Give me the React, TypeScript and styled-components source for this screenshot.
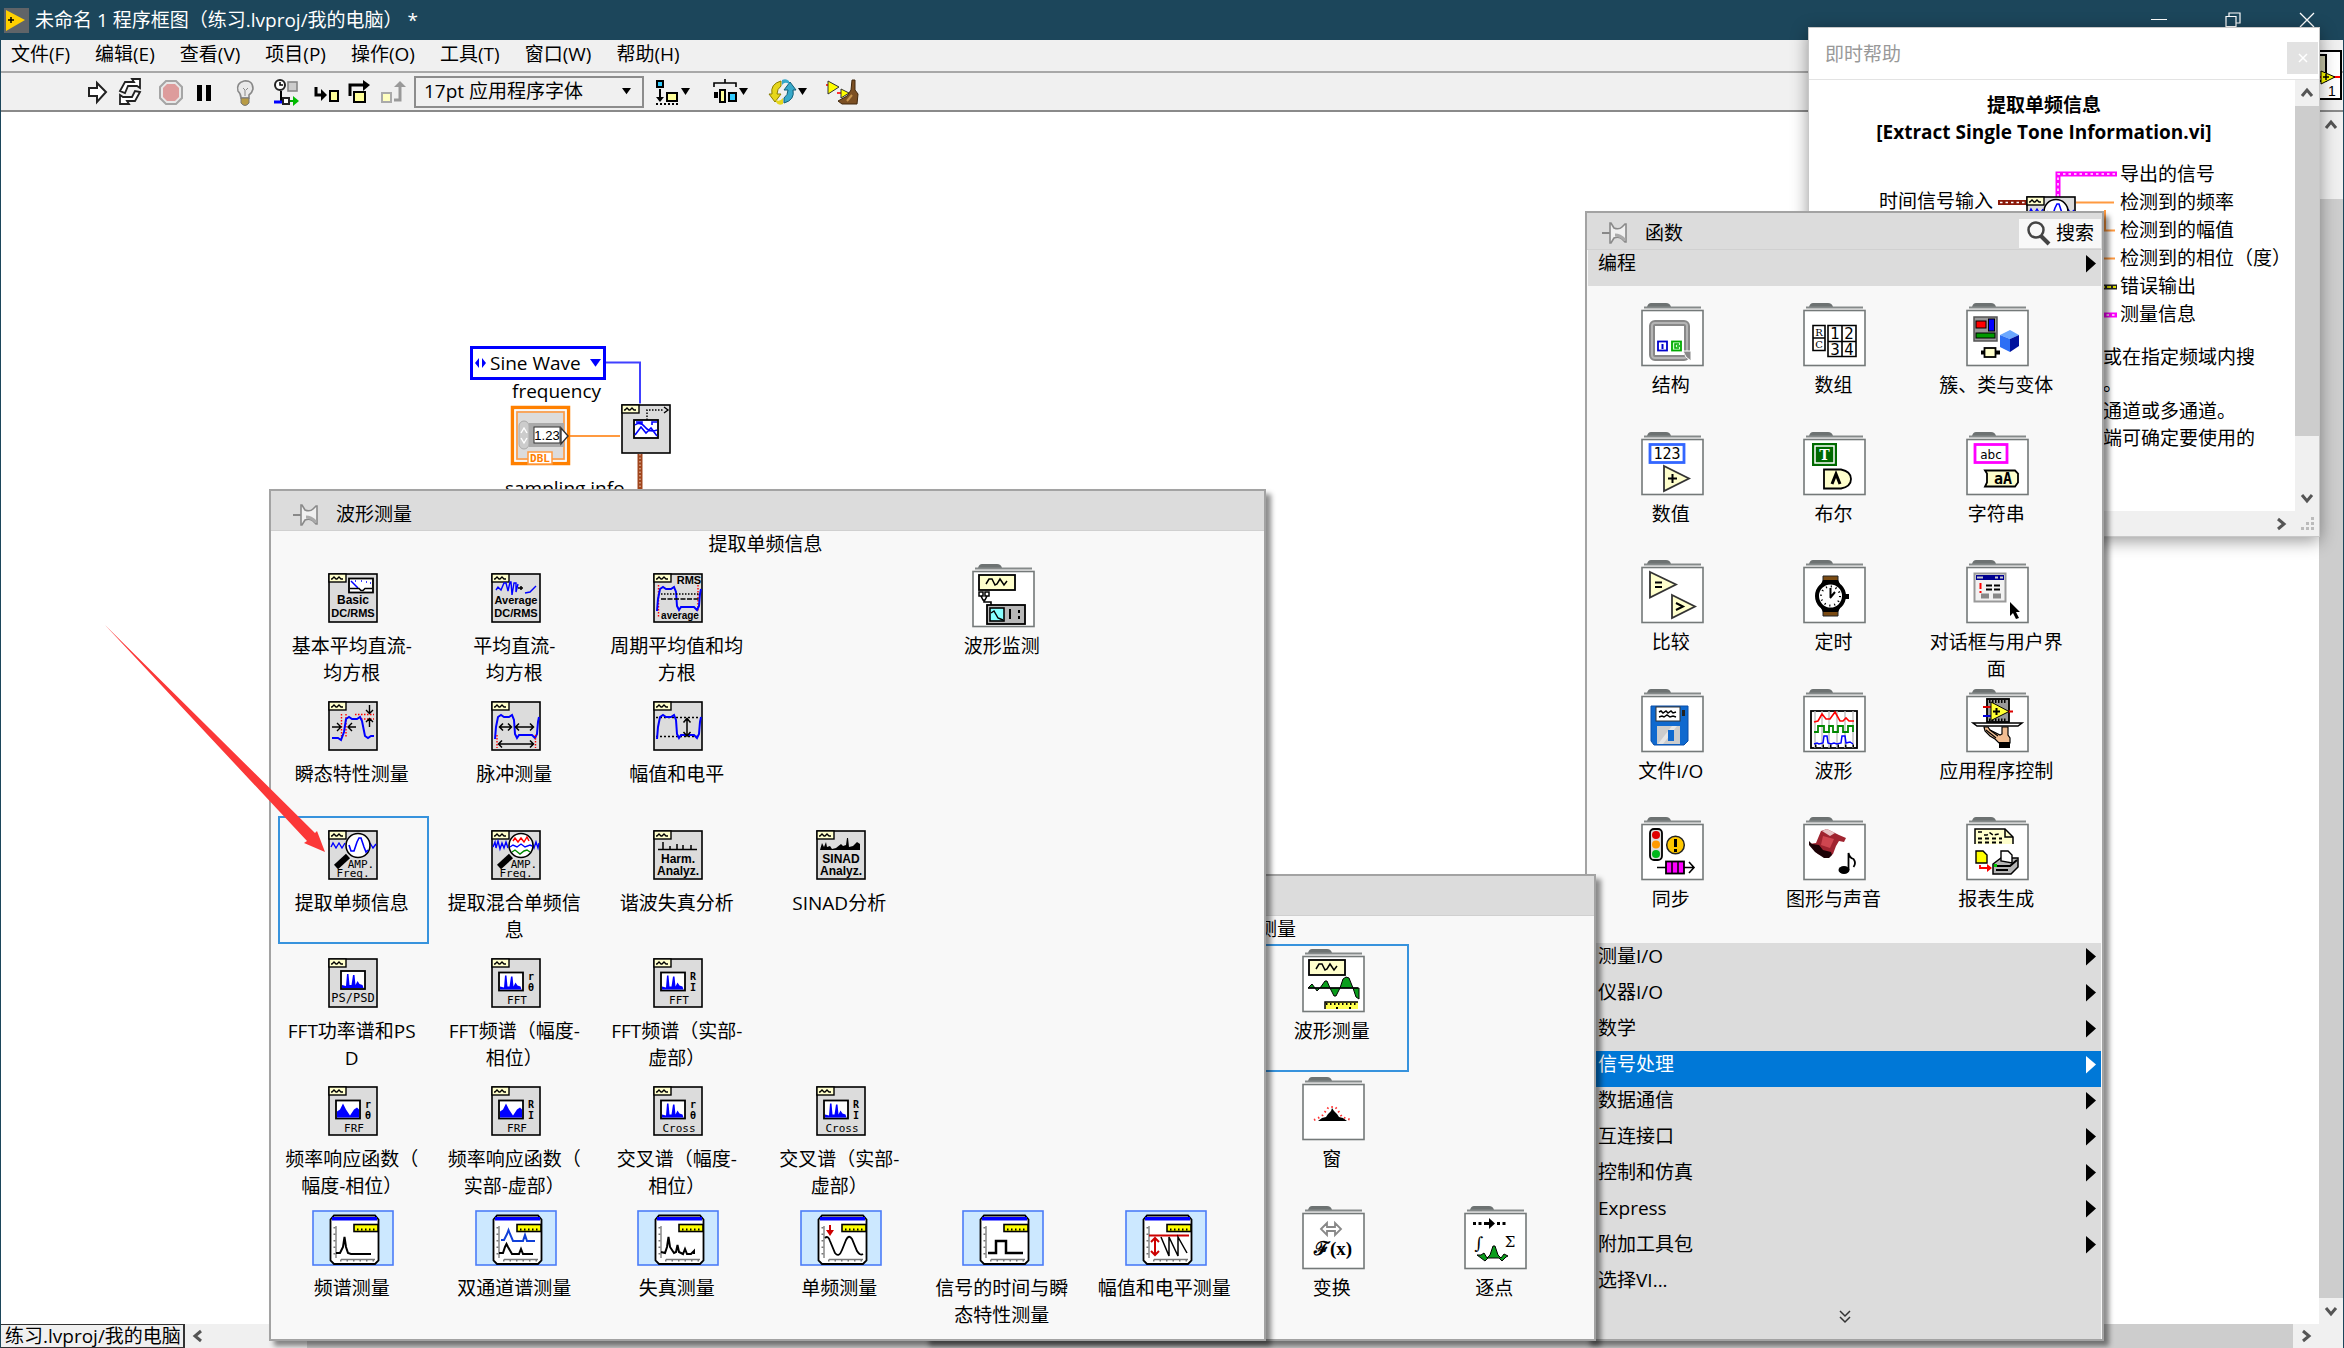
import React from 'react';
import styled, { createGlobalStyle, css } from 'styled-components';

const GlobalStyle = createGlobalStyle`
  *, *::before, *::after { box-sizing: border-box; }
  body { margin: 0; background: #fff; color: #000; }
  body, button, select {
    font-family: "Open Sans", "Noto Sans CJK SC", sans-serif;
    font-size: 19px;
    line-height: 27px;
  }
  button { margin: 0; padding: 0; border: 0; background: none; color: inherit; }
  svg { display: block; flex: none; }
`;

const TEAL = '#1c465b';
const CHROME = '#f0f0f0';
const HEADER = '#dcdcdc';
const PALETTE = '#f8f8f8';
const THUMB = '#cdcdcd';
const BLUE = '#0000ff';

/* ---------- application window ---------- */

const AppWindow = styled.div`
  position: relative;
  display: flex;
  flex-direction: column;
  height: 100vh;
  overflow: hidden;
  border: solid ${TEAL};
  border-width: 0 1px;
  background: #fff;
`;

const TitleBar = styled.header`
  display: flex;
  align-items: center;
  height: 40px;
  padding: 0 2px 0 3px;
  gap: 6px;
  background: ${TEAL};
  color: #fff;
`;

const TitleText = styled.h1`
  flex: 1;
  margin: 0;
  font-size: 19px;
  font-weight: 400;
  white-space: pre;
`;

const CaptionButton = styled.button`
  display: flex;
  align-items: center;
  justify-content: center;
  width: 68px;
  height: 38px;
`;

const MenuBar = styled.nav`
  display: flex;
  gap: 25px;
  height: 33px;
  padding: 0 0 3px 10px;
  background: ${CHROME};
  border-bottom: 2px solid #a8a8a8;
`;

const ToolBar = styled.div`
  display: flex;
  align-items: center;
  height: 39px;
  padding-left: 83px;
  gap: 15px;
  background: ${CHROME};
  border-bottom: 2px solid #8a8a8a;
`;

const ToolGroup = styled.div`
  display: flex;
  gap: 7px;
`;

const FontBox = styled.label`
  display: flex;
  align-items: center;
  width: 230px;
  height: 32px;
  margin: 0 -5px 0 -7px;
  border: 2px solid #8c8c8c;
  position: relative;
`;

const PlainSelect = styled.select`
  appearance: none;
  width: 100%;
  height: 100%;
  padding: 0 8px;
  border: 0;
  background: none;
  color: #000;
`;

const SelectMark = styled.span`
  position: absolute;
  right: ${(p: { $right: number }) => p.$right}px;
  pointer-events: none;
`;

const ConnectorIcon = styled.button`
  position: absolute;
  top: 50px;
  right: 1px;
  width: 50px;
  height: 50px;
`;

const Editor = styled.main`
  flex: 1;
  min-height: 0;
  display: grid;
  grid-template: minmax(0, 1fr) 24px / minmax(0, 1fr) 24px;
`;

const Canvas = styled.div`
  position: relative;
  overflow: hidden;
  background: #fff;
`;

const BottomBar = styled.footer`
  display: flex;
  background: ${CHROME};
`;

const ContextTab = styled.button`
  padding: 0 2px 0 4px;
  border: solid #333;
  border-width: 1px 2px 1px 0;
  line-height: 20px;
  white-space: nowrap;
`;

const Corner = styled.div`
  background: ${CHROME};
`;

const ScrollTrack = styled.div<{ $vertical?: boolean }>`
  display: flex;
  flex-direction: ${(p) => (p.$vertical ? 'column' : 'row')};
  flex: 1;
  min-width: 0;
  min-height: 0;
  background: ${CHROME};
`;

const ScrollButton = styled.button`
  display: flex;
  align-items: center;
  justify-content: center;
  flex: 0 0 26px;
  min-width: 24px;
`;

const ScrollThumb = styled.div<{ $before: number; $after: number; $vertical?: boolean }>`
  flex: 1;
  background: ${THUMB};
  margin: ${(p) => (p.$vertical ? `${p.$before}px 0 ${p.$after}px` : `0 ${p.$after}px 0 ${p.$before}px`)};
`;

/* ---------- block diagram ---------- */

const Node = styled.div<{ $x: number; $y: number }>`
  position: absolute;
  left: ${(p) => p.$x}px;
  top: ${(p) => p.$y}px;
  white-space: nowrap;
`;

const EnumConstant = styled.label`
  position: relative;
  display: flex;
  align-items: center;
  width: 136px;
  height: 34px;
  padding-left: 2px;
  border: 3px solid ${BLUE};
  background: #fff;
`;

const EnumSelect = styled(PlainSelect)`
  padding: 0 4px;
`;

/* ---------- floating windows ---------- */

const windowFrame = css`
  position: absolute;
  display: flex;
  flex-direction: column;
  border: 2px solid #a3a3a3;
  box-shadow: 5px 5px 5px rgba(0, 0, 0, 0.45);
`;

const PaletteWindow = styled.section<{ $left: number; $top: number; $width: number }>`
  ${windowFrame}
  left: ${(p) => p.$left}px;
  top: ${(p) => p.$top}px;
  bottom: 7px;
  width: ${(p) => p.$width}px;
  background: ${PALETTE};
`;

const PaletteHeader = styled.header<{ $tall?: boolean }>`
  display: flex;
  align-items: center;
  gap: 17px;
  flex: 0 0 ${(p) => (p.$tall ? 40 : 37)}px;
  padding: ${(p) => (p.$tall ? '8px' : '4px')} 0 0 ${(p) => (p.$tall ? 22 : 15)}px;
  background: ${HEADER};
  border-bottom: 1px solid #d0d0d0;
`;

const PaletteTitle = styled.h2`
  flex: 1;
  margin: 0;
  font-size: 19px;
  font-weight: 400;
`;

const SearchButton = styled.button`
  display: flex;
  align-items: center;
  gap: 4px;
  height: 29px;
  margin-right: 1px;
  padding: 0 7px;
  background: ${PALETTE};
`;

const PaletteCaption = styled.p`
  margin: 0;
  flex: 0 0 27px;
  padding-right: 4px;
  text-align: center;
`;

type GridProps = { $cols: number; $rows: number; $top?: number; $left: number; $right: number; $bottom: number };

const TileGrid = styled.div<GridProps>`
  flex: 1;
  min-height: 0;
  display: grid;
  grid-template-columns: repeat(${(p) => p.$cols}, 1fr);
  grid-template-rows: repeat(${(p) => p.$rows}, minmax(0, 1fr));
  padding: ${(p) => p.$top ?? 0}px ${(p) => p.$right}px ${(p) => p.$bottom}px ${(p) => p.$left}px;
`;

const TileButton = styled.button<{ $col: number; $row: number; $selected?: boolean }>`
  grid-column: ${(p) => p.$col};
  grid-row: ${(p) => p.$row};
  display: flex;
  flex-direction: column;
  align-items: center;
  justify-content: flex-start;
  margin: 0 6px;
  box-shadow: ${(p) => (p.$selected ? 'inset 0 0 0 2px #3793dd' : 'none')};
`;

type Kind = 'vi' | 'folder' | 'express';
const iconOffset: Record<Kind, number> = { vi: 14, folder: 5, express: 9 };

const TileIcon = styled.span<{ $kind: Kind }>`
  flex: 0 0 74px;
  padding-top: ${(p) => iconOffset[p.$kind]}px;
`;

const TileLabel = styled.span`
  padding-right: 3px;
  white-space: pre;
  text-align: center;
`;

const CategoryList = styled.ul`
  flex: none;
  margin: 0 1px;
  padding: 0;
  list-style: none;
  background: ${HEADER};
`;

const CategoryButton = styled.button<{ $active?: boolean }>`
  display: flex;
  align-items: flex-start;
  justify-content: space-between;
  width: 100%;
  height: 36px;
  padding: 0 5px 0 10px;
  background: ${(p) => (p.$active ? '#0078d7' : 'transparent')};
  color: ${(p) => (p.$active ? '#fff' : '#000')};
`;

const MoreButton = styled.button`
  display: flex;
  align-items: center;
  justify-content: center;
  width: 100%;
  height: 28px;
  margin-bottom: 8px;
`;

const HelpWindow = styled.aside`
  position: absolute;
  top: 27px;
  right: 23px;
  width: 512px;
  display: flex;
  flex-direction: column;
  border: 1px solid #c8c8c8;
  background: #fff;
  box-shadow: 0 4px 16px rgba(0, 0, 0, 0.4);
`;

const HelpHeader = styled.header`
  display: flex;
  justify-content: space-between;
  align-items: flex-end;
  height: 52px;
  padding: 0 1px 5px 16px;
  border-bottom: 1px solid #e3e3e3;
  color: #999;
`;

const HelpName = styled.span`
  padding-bottom: 6px;
`;

const HelpClose = styled.button`
  display: flex;
  align-items: center;
  justify-content: center;
  width: 31px;
  height: 32px;
  background: #e2e2e2;
`;

const HelpMiddle = styled.div`
  display: flex;
  height: 431px;
`;

const HelpScroll = styled.div`
  display: flex;
  width: 24px;
`;

const HelpBody = styled.div`
  flex: 1;
  padding-top: 12px;
`;

const HelpHeading = styled.h3`
  margin: 0 16px 14px 0;
  font-size: 19px;
  font-weight: 700;
  text-align: center;
`;

const Pinout = styled.div`
  display: grid;
  grid-template-columns: 184px 127px 1fr;
`;

const PinInput = styled.span`
  padding-top: 28px;
  text-align: right;
`;

const PinOutputs = styled.ul`
  margin: 0;
  padding: 0;
  list-style: none;
  line-height: 28px;
  white-space: nowrap;
`;

const HelpText = styled.p`
  margin: 16px 0 0;
  padding-left: 294px;
  white-space: pre;
`;

const HelpFooter = styled.div`
  display: flex;
  justify-content: flex-end;
  align-items: center;
  gap: 12px;
  height: 25px;
  padding-right: 3px;
  background: ${CHROME};
`;

const Annotation = styled.svg`
  position: absolute;
  left: 99px;
  top: 620px;
  pointer-events: none;
`;

/* ---------- drawing helpers ---------- */

type TextProps = { x: number; y: number; s?: number; f?: string; w?: number; a?: 'start' | 'middle' | 'end'; font?: string; children: React.ReactNode };
const T = ({ x, y, s = 12, f = '#000', w = 400, a = 'middle', font = 'Liberation Sans', children }: TextProps) => (
  <text x={x} y={y} fontSize={s} fill={f} fontWeight={w} textAnchor={a} fontFamily={`"${font}", sans-serif`}>{children}</text>
);

const Line = ({ d, c = '#000', w = 2, dash }: { d: string; c?: string; w?: number; dash?: string }) => (
  <path d={d} fill="none" stroke={c} strokeWidth={w} strokeDasharray={dash} />
);

const ViBase = () => (
  <>
    <rect x="1" y="1" width="48" height="48" fill="#dcdcdc" stroke="#000" strokeWidth="1.6" />
    <rect x="1" y="1" width="17" height="8" fill="#ffffcc" stroke="#000" strokeWidth="1.4" />
    <Line d="M3 6h1l2-2 2 2h1l2-2 2 2h2" w={1.3} />
  </>
);

const ViFrame = ({ children }: { children?: React.ReactNode }) => (
  <svg width="50" height="50" viewBox="0 0 50 50">
    <ViBase />
    {children}
  </svg>
);

const Folder = ({ children }: { children?: React.ReactNode }) => (
  <svg width="63" height="64" viewBox="0 0 63 64">
    <path d="M6 4q1-4 4-4h15q4 0 5 4z" fill="#6d7272" />
    <path d="M3 4.500h57" stroke="#858a8a" strokeWidth="2" />
    <rect x="1" y="7.500" width="61" height="55" fill="#fff" stroke="#747979" strokeWidth="1.6" />
    {children}
  </svg>
);

const Express = ({ children }: { children?: React.ReactNode }) => (
  <svg width="82" height="56" viewBox="0 0 82 56">
    <rect x="1" y="1" width="80" height="54" fill="#cce8ff" stroke="#4b7cf8" strokeWidth="1.6" />
    <g transform="translate(17 4)">
      <path d="M5 1.500h41l3.500 4v41l-3.500 3.500h-41l-3.500-3.500v-41z" fill="#fff" stroke="#000" strokeWidth="1.8" />
      <path d="M3 3h45v3.500h-45z" fill={BLUE} />
      <Line d="M7 12v32M12 45.500h34" c="#777" w={1.3} />
      <Line d="M5.500 13v32M11 46.500h35" c="#777" w={2} dash="1.5 5" />
      {children}
      <rect x="25" y="10.500" width="24" height="7" fill="#ff0" stroke="#000" strokeWidth="1.6" />
      <Line d="M28 15.500h19" w={2} dash="1.500 2.500" />
    </g>
  </svg>
);

const pulse = 'M4 38l1-12 2-10 3-2 3 2h5l3-2 2 5 1 14 2 4 2-3h13l3 3 2-4 1-12 1-5';

const Spectrum = ({ x, y }: { x: number; y: number }) => (
  <g transform={`translate(${x} ${y})`}>
    <rect x="0" y="0" width="24" height="18" fill="#fff" stroke="#000" strokeWidth="1.8" />
    <path d="M1 17v-3l4 1 1-12h1.500l1 11 2 0 1.500-10h1.500l1 10 2-4 2 3 3 1 1 3z" fill={BLUE} />
  </g>
);

const Response = ({ x, y }: { x: number; y: number }) => (
  <g transform={`translate(${x} ${y})`}>
    <rect x="0" y="0" width="24" height="18" fill="#fff" stroke="#000" strokeWidth="1.8" />
    <path d="M1 17v-6l3-2 3-6 3 6 4 6 4-6 3-2 2 2v8z" fill={BLUE} />
  </g>
);

const SpecVi = ({ kind, unit, text }: { kind: 'spec' | 'resp'; unit: 'r' | 'i'; text: string }) => (
  <ViFrame>
    {kind === 'spec' ? <Spectrum x={8} y={14.5} /> : <Response x={8} y={14.5} />}
    <T x={40} y={22} s={10} w={700} font="DejaVu Sans Mono">{unit === 'r' ? 'r' : 'R'}</T>
    <T x={40} y={33} s={10} w={700} font="DejaVu Sans Mono">{unit === 'r' ? 'θ' : 'I'}</T>
    <T x={26} y={46} s={11} font="DejaVu Sans Mono">{text}</T>
  </ViFrame>
);

const LensGlass = ({ children }: { children: React.ReactNode }) => (
  <>
    <Line d="M20 26L8 37" w={6} />
    <circle cx="30" cy="15.500" r="12" fill="#fff" stroke="#000" strokeWidth="1.600" />
    {children}
  </>
);

const Lens = ({ children }: { children: React.ReactNode }) => (
  <>
    <LensGlass>{children}</LensGlass>
    <T x={33} y={38} s={11} font="DejaVu Sans Mono">AMP.</T>
    <T x={25} y={47} s={11} font="DejaVu Sans Mono">Freq.</T>
  </>
);

const toneNoise = 'M3 17l2-4 3 5 3-5 3 5 3-5M42 13l3 5 3-4';
const toneCurve = 'M21 15l2 6h3l3-9 2-4h2l3 9 2 5 2-2';

const Chevron = styled.svg<{ $turn: number }>`
  transform: rotate(${(p) => p.$turn}deg);
`;

const SmallChevron = ({ turn }: { turn: number }) => (
  <Chevron $turn={turn} width="14" height="14" viewBox="0 0 14 14">
    <path d="M2 10l5-6 5 6" fill="none" stroke="#555" strokeWidth="3" />
  </Chevron>
);

const Drop = ({ size = 9, color = '#000' }: { size?: number; color?: string }) => (
  <svg width={size} height={size} viewBox="0 0 10 10"><path d="M0 1h10l-5 7z" fill={color} /></svg>
);

const RightMark = () => (
  <svg width="10" height="26" viewBox="0 0 10 26"><path d="M0 5l10 8.500-10 9z" fill="currentColor" /></svg>
);

const Pin = () => (
  <svg width="26" height="24" viewBox="0 0 26 24">
    <path d="M0 12h8" stroke="#888" strokeWidth="2" />
    <path d="M8 2l1 0 3 5q5 2 8-1l3-3h1v18h-1l-3-3q-3-3-8-1l-3 5h-1z" fill="#f0f0f0" stroke="#8a8a8a" strokeWidth="1.600" />
    <path d="M13 14q5 0 10 5" stroke="#aaa" strokeWidth="3" fill="none" />
  </svg>
);

/* ---------- icons ---------- */

const icons: Record<string, React.ReactNode> = {
  basic: (
    <ViFrame>
      <rect x="21" y="5.500" width="24" height="14" fill="#fff" stroke="#000" strokeWidth="1.800" />
      <Line d="M23 8l7 7M27 8h1M33 8h1M38 9h1M42 10h1" c={BLUE} w={1.5} />
      <path d="M22 15.500h9l2 2h2l2-2h7" stroke="#000" strokeWidth="1.500" fill="none" />
      <T x={25} y={31} s={12} w={700}>Basic</T>
      <T x={25} y={44} s={11} w={700}>DC/RMS</T>
    </ViFrame>
  ),
  average: (
    <ViFrame>
      <Line d="M5 17l2-3 3 3 3-7 2 0 2 8 2-9 1 0 1 13 2-12 2 0v9l2-8M34 20l5-1 6-6" c={BLUE} w={1.4} />
      <Line d="M27 15h5M30 13v4" w={1.500} />
      <T x={25} y={31} s={11} w={700}>Average</T>
      <T x={25} y={44} s={11} w={700}>DC/RMS</T>
    </ViFrame>
  ),
  cycle: (
    <ViFrame>
      <Line d="M5.500 12v32M45 12v26" c="#f00" w={1.4} dash="1.500 1.500" />
      <Line d={pulse} c={BLUE} />
      <Line d="M8 21h38" w={1.4} dash="1.500 1.500" />
      <Line d="M8 26h38" w={1.4} dash="5 1.500" />
      <T x={36} y={11} s={11} w={700}>RMS</T>
      <T x={27} y={46} s={10} w={700}>average</T>
    </ViFrame>
  ),
  transient: (
    <ViFrame>
      <Line d="M13.500 13v23M18 13v23M27 13.500h19M33 18h13" c="#f00" w={1.400} dash="1.500 1.500" />
      <Line d="M4 37l6 0 3 2 3-8 2-13 3-2 3 2h5l3-2 2 4 3 15 3 2 3-2h3" c={BLUE} />
      <Line d="M4 26h8M9 22l4 4-4 4M28 26h-8M24 22l-4 4 4 4M41.500 4v8M38 9l3.500 3.500 3.500-3.500M41.500 26v-8M38 21l3.500-3.500 3.500 3.500" w={1.400} />
    </ViFrame>
  ),
  pulse: (
    <ViFrame>
      <Line d={pulse} c={BLUE} />
      <Line d="M6 34v13M44.500 34v13" c="#f00" w={1.400} dash="1.500 1.500" />
      <Line d="M9 26h11M12 22.500l-3.500 3.500 3.500 3.500M17 22.500l3.500 3.500-3.500 3.500M24 26h19M28 22.500l-3.500 3.500 3.500 3.500M39 22.500l3.500 3.500-3.500 3.500M7 43h36M11 39.500l-3.500 3.500 3.500 3.500M39 39.500l3.500 3.500-3.500 3.500" w={1.500} />
    </ViFrame>
  ),
  level: (
    <ViFrame>
      <Line d="M3 16.500h44M3 35.500h44" w={1.400} dash="2 2" />
      <Line d={pulse} c={BLUE} />
      <Line d="M34 18v16M30.500 21.500l3.500-4 3.500 4M30.500 31l3.500 4 3.500-4" w={1.500} />
    </ViFrame>
  ),
  tone: (
    <ViFrame>
      <Line d={toneNoise} c={BLUE} w={1.400} />
      <Lens><Line d={toneCurve} c={BLUE} w={1.600} /></Lens>
    </ViFrame>
  ),
  multitone: (
    <ViFrame>
      <Line d="M2 17l2-5 1 6 2-7 2 8 2-6 2 5 2-6 2 6M41 13l2 5 2-6 2 6 1-5" c={BLUE} w={1.400} />
      <Lens>
        <Line d="M22 11l2-3 3 4 3-4 3 4 3-5 2 4" c="#f00" w={1.400} />
        <Line d="M19 17l3-2 4 2 4-3 4 3 5-2 2 1" c={BLUE} w={1.400} />
        <Line d="M21 22l3-2 5 4 4-3 3-1 3 2" c="#080" w={1.400} />
      </Lens>
    </ViFrame>
  ),
  harm: (
    <ViFrame>
      <Line d="M5 19.500h39M10 19v-7M17 19v-3M24 19v-5M30 19v-4M38 19v-4" w={1.500} />
      <T x={25} y={33} s={12} w={700}>Harm.</T>
      <T x={25} y={45} s={12} w={700}>Analyz.</T>
    </ViFrame>
  ),
  sinad: (
    <ViFrame>
      <path d="M4 20l2-7 2 4 2-5 1 5 3-1 2 3 4-1 5-4 2 2 3-1 1-7h1l1 9 4-1 4-4 3 2v6z" fill="#000" />
      <T x={25} y={33} s={12} w={700}>SINAD</T>
      <T x={25} y={45} s={12} w={700}>Analyz.</T>
    </ViFrame>
  ),
  psd: (
    <ViFrame>
      <Spectrum x={13} y={13} />
      <T x={25} y={44} s={12} font="DejaVu Sans Mono">PS/PSD</T>
    </ViFrame>
  ),
  fftR: <SpecVi kind="spec" unit="r" text="FFT" />,
  fftI: <SpecVi kind="spec" unit="i" text="FFT" />,
  frfR: <SpecVi kind="resp" unit="r" text="FRF" />,
  frfI: <SpecVi kind="resp" unit="i" text="FRF" />,
  crossR: <SpecVi kind="spec" unit="r" text="Cross" />,
  crossI: <SpecVi kind="spec" unit="i" text="Cross" />,
  exSpectrum: <Express><Line d="M7 39l4 0 3-6 1.500-10 1.500 10 2 6 3 1h20" /></Express>,
  exDual: (
    <Express>
      <Line d="M9 26l3 0 3-6 1.500-4 1.500 4 3 7h10l2-6 2 6h8" c="#1040d8" />
      <Line d="M7 39l4 0 2-6 1.500-3 1.500 3 4 7h7l2-5 2 5h10" />
    </Express>
  ),
  exDistortion: <Express><Line d="M7 38l4 1 2-6 1.500-10 1.500 10 4 6 2-1 1.500-7 1.500 7 4 2 2-5 2 5h4l3-3v3" /></Express>,
  exTone: (
    <Express>
      <Line d="M13 11v7" c="#c00" />
      <path d="M9 16h8l-4 6z" fill="#c00" />
      <Line d="M8 24q3-3 5 3l5 12q4 5 7-3l4-10q3-6 6-1l5 12q3 5 6 3" w={1.800} />
    </Express>
  ),
  exTiming: <Express><Line d="M9 39h8v-12h10v12h17" w={2.500} /></Express>,
  exLevel: (
    <Express>
      <Line d="M7 21.500h40M13 24v16M9 28l4-4 4 4M9 37l4 4 4-4" c="#c00" w={2} />
      <Line d="M19 23l8 19v-19l9 19v-19l9 16" w={1.500} />
    </Express>
  ),
  monitor: (
    <Folder>
      <rect x="7" y="11" width="36" height="15" fill="#ffffcc" stroke="#000" strokeWidth="1.800" />
      <Line d="M14 20l3-5 3 0 3 6 2-1 3-5 4 6 3-4" w={1.500} />
      <rect x="7" y="28" width="4" height="4" fill="none" stroke="#000" strokeWidth="1.500" />
      <rect x="13" y="28" width="4" height="4" fill="none" stroke="#000" strokeWidth="1.500" />
      <Line d="M9 32l2 4h2l2-4M12 36v2h7v3" w={1.600} />
      <rect x="15" y="41" width="38" height="19" fill="#b8b8b8" stroke="#000" strokeWidth="1.800" />
      <rect x="18" y="44" width="14" height="13" fill="#8ff" stroke="#000" strokeWidth="1.600" />
      <Line d="M19 49l3-2 4 7 5 2" w={1.500} />
      <Line d="M38 45v10M47 46v3M47 52v3" />
    </Folder>
  ),
  wave: (
    <Folder>
      <rect x="7" y="11" width="36" height="15" fill="#ffffcc" stroke="#000" strokeWidth="1.800" />
      <Line d="M14 20l3-5 3 0 3 6 2-1 3-5 4 6 3-4" w={1.500} />
      <path d="M6 39l4-4 3 4 2 3 3-3 5-7h2l3 7 4 8h2l4-8 3-9 3-2 3 1 4 10 3 9 3 2v-11z" fill="#0a9d1c" stroke="#000" strokeWidth="1" />
      <Line d="M6 39h50" w={1.500} />
      <path d="M23 60v-7h33v7z" fill="#ffff50" /><Line d="M23 60v-7h33" w={1.500} />
      <Line d="M24 55h32" dash="1.500 2.500" /><Line d="M34 59h2M47 59h2" />
    </Folder>
  ),
  windowFn: (
    <Folder>
      <path d="M16 44l4-3 4-1 2-3 3-3 1-3 2 3 3 3 2 3 4 1 4 3z" fill="#000" />
      <Line d="M12 43l8-4 6-8 2-1h5l2 2 5 8 9 3" c="#f33" w={2} dash="1.500 3" />
    </Folder>
  ),
  transform: (
    <Folder>
      <path d="M19 23l6-6v4h8v-4l6 6-6 6v-4h-8v4z" fill="#fff" stroke="#888" strokeWidth="1.800" />
      <T x={31} y={49} s={19} w={700} font="Liberation Serif">ℱ(x)</T>
    </Folder>
  ),
  ptbypt: (
    <Folder>
      <Line d="M9 17.500h9" w={3} dash="3 2.500" /><Line d="M33 17.500h9" w={3} dash="3 2.500" />
      <Line d="M20 17.500h7" w={3} /><path d="M25 12l6 5.500-6 5.500z" />
      <T x={15} y={43} s={17} font="DejaVu Serif">∫</T>
      <T x={46} y={41} s={15} font="DejaVu Serif">Σ</T>
      <path d="M13 49l4 0 3-2 3 5 3-3 3-9 2 0 3 9 3 3 3-4 4 2-2 1-4 4-3-3h-11l-3 3z" fill="#0a9d1c" stroke="#000" strokeWidth="1" />
    </Folder>
  ),
  struct: (
    <Folder>
      <rect x="11" y="20" width="35" height="35" rx="3" fill="#fff" stroke="#888" strokeWidth="6" />
      <rect x="11" y="20" width="35" height="35" rx="3" fill="none" stroke="#b5b5b5" strokeWidth="2" />
      <path d="M42 48h8v10l-5-4z" fill="#888" stroke="#fff" />
      <rect x="17" y="38.500" width="9" height="9" fill="#fff" stroke="#00c" strokeWidth="1.800" /><Line d="M21.500 41v5" c="#00c" />
      <rect x="31" y="38.500" width="9" height="9" fill="#cfc" stroke="#0a0" strokeWidth="1.800" /><Line d="M38 41h-4v4h4M36 43h3" c="#0a0" w={1.500} />
    </Folder>
  ),
  array: (
    <Folder>
      <Line d="M10 22.500h12v25h-12zM10 35h12M25 22.500h28v31h-28zM39 22.500v31M25 38.500h28" w={1.600} />
      <T x={16} y={33} s={10} font="DejaVu Serif">R</T><T x={16} y={45} s={10} font="DejaVu Serif">C</T>
      <T x={32} y={36} s={15} font="DejaVu Sans">1</T><T x={46} y={36} s={15} font="DejaVu Sans">2</T>
      <T x={32} y={52} s={15} font="DejaVu Sans">3</T><T x={46} y={52} s={15} font="DejaVu Sans">4</T>
    </Folder>
  ),
  cluster: (
    <Folder>
      <rect x="8" y="14" width="23" height="24" fill="#999" stroke="#555" strokeWidth="1.500" />
      <rect x="10" y="18" width="10" height="7" fill="#f00" stroke="#000" />
      <rect x="22.500" y="16" width="6" height="12" fill="#00f" stroke="#000" />
      <rect x="10" y="30" width="19" height="5" fill="#090" stroke="#000" />
      <path d="M34 32l10-5 9 5-9 4z" fill="#6ba8ff" /><path d="M34 32l10 4v13l-10-5z" fill="#2c6ff5" /><path d="M53 32l-9 4v13l9-6z" fill="#00129e" />
      <Line d="M15 49.500h19" w={4} /><rect x="18.500" y="45" width="11" height="9" fill="#ffffcc" stroke="#000" strokeWidth="1.800" />
    </Folder>
  ),
  numeric: (
    <Folder>
      <rect x="9" y="12.500" width="34" height="18" fill="#fff" stroke="#3366ff" strokeWidth="2.800" />
      <T x={26} y={27} s={15} font="DejaVu Sans Mono">123</T>
      <path d="M23 34l25 12.500-25 12.500z" fill="#ffffcc" stroke="#333" strokeWidth="1.800" />
      <Line d="M27 46.500h9M31.500 42v9" />
    </Folder>
  ),
  boolean: (
    <Folder>
      <rect x="10.500" y="12.500" width="22" height="20" fill="#006a00" stroke="#006a00" strokeWidth="3" />
      <rect x="12" y="14" width="19" height="17" fill="none" stroke="#fff" strokeWidth="1.500" />
      <T x={21.5} y={28} s={14} w={700} f="#fff" font="DejaVu Serif">T</T>
      <path d="M21 37.500h17q10 2 10 9.500t-10 9.500h-17z" fill="#ffffcc" stroke="#000" strokeWidth="1.800" />
      <Line d="M29 52l4-10 4 10" w={3} />
    </Folder>
  ),
  string: (
    <Folder>
      <rect x="9" y="12.500" width="32" height="18" fill="#fff" stroke="#f0f" strokeWidth="2.800" />
      <T x={25} y={26.5} s={12} font="DejaVu Sans">abc</T>
      <path d="M19 38.500h30l3 3v9l-3 4h-30l2-4v-9z" fill="#ffffcc" stroke="#000" strokeWidth="1.800" />
      <T x={37} y={51.5} s={15} w={700} font="DejaVu Sans Mono">aA</T>
    </Folder>
  ),
  compare: (
    <Folder>
      <path d="M9 12l26 12.500-26 13z" fill="#ffffcc" stroke="#333" strokeWidth="1.800" /><Line d="M14 22.500h7M14 27h7" />
      <path d="M31 35l23 11.500-23 11.500z" fill="#ffffcc" stroke="#333" strokeWidth="1.800" /><Line d="M35 43l7 3.500-7 3.500" />
    </Folder>
  ),
  timing: (
    <Folder>
      <path d="M20 16h15v40h-15z" fill="#7a4a12" stroke="#222" />
      <path d="M20 20h15l2 4h-19zM18 48h19l-2 4h-15z" fill="#000" />
      <circle cx="27.500" cy="36" r="13.500" fill="#fff" stroke="#000" strokeWidth="4" />
      <circle cx="27.500" cy="36" r="9.500" fill="none" stroke="#000" strokeWidth="2" strokeDasharray="1.200 3.770" />
      <Line d="M27.500 37v-9M27 38l5-6" w={2} /><rect x="42" y="34" width="4" height="5" />
    </Folder>
  ),
  dialog: (
    <Folder>
      <rect x="8.500" y="13.500" width="31" height="28" fill="#f2f2f2" stroke="#999" strokeWidth="2" />
      <rect x="10" y="15" width="28" height="5" fill="#000090" /><Line d="M11 17.500h6M29 17.500h3M34 17.500h3" c="#ccc" w={2} />
      <Line d="M14.500 23v6M14.500 31v2" c="#f00" />
      <Line d="M20 25.500h14M20 29.500h14" dash="6 2" />
      <Line d="M15 36h8M27 36h8" c="#888" w={5} />
      <path d="M44 42v14l3-3 3 6 3-1-3-6h4z" fill="#000" />
    </Folder>
  ),
  file: (
    <Folder>
      <path d="M10 17h37v35l-4 4h-30l-3-4z" fill="#0f69cf" stroke="#0a4fa8" />
      <rect x="15" y="18" width="24" height="14" fill="#fff" stroke="#333" />
      <Line d="M18 23l2-1 2 2 3-2 2 2 3-2 2 2 3-1M18 28l3-1 2 1 3-2 3 2 3-1 3 1" w={1.500} />
      <rect x="41" y="21" width="3" height="6" fill="#222" />
      <path d="M16 37h23v18h-23z" fill="#ccc" /><path d="M17 55l14-18h5l-14 18z" fill="#e6e6e6" />
      <rect x="27" y="41" width="6" height="11" fill="#0f69cf" />
    </Folder>
  ),
  waveform: (
    <Folder>
      <rect x="8" y="22" width="46" height="37" fill="#fff" stroke="#000" strokeWidth="1.800" />
      <Line d="M12 22v37M19 22v37M26 22v37M34 22v37M42 22v37M50 22v37" c="#bbb" w={1.300} />
      <Line d="M11 33l4-1 4-7 4 5 4 0 5-7 5 9 3 0 3-3 3 3h5" c="#f00" w={1.600} />
      <Line d="M11 43h4v-6h6v6h5v-6h4v6h5v-6h5v6h5v-6h5v6" c="#080" w={1.800} />
      <Line d="M11 55l3-1 2 1 4-1 1-7h3l1 7 3 1 3-1 3 1 4-1 1-7h3l1 7 4-1 3 2" c={BLUE} w={1.500} />
      <Line d="M12 57h40" w={3} dash="1.500 6" />
    </Folder>
  ),
  appctl: (
    <Folder>
      <rect x="21" y="10" width="22" height="23" fill="#999" stroke="#000" strokeWidth="1.800" />
      <Line d="M23 12.500h18M23 31h18" w={3} dash="1.500 1.500" />
      <Line d="M17 18h8M42 22.500h5" c="#d00" /><Line d="M17 27h8" c="#00d" />
      <path d="M25 13l18 9.500-18 9z" fill="#ff3" stroke="#000" /><Line d="M27 22.500h7M30.500 19v7" />
      <path d="M7 34h49l-4 3h-41z" fill="#fff" stroke="#000" strokeWidth="1.500" />
      <path d="M18 38l4 0 2 3 6 3 4 2 2-1v-7h6v8l2 3v5h-11l-4-4-5-3-5-5z" fill="#f0bd92" stroke="#000" strokeWidth="1.200" />
      <Line d="M20 41l10 8M24 41l8 6" w={1.200} /><path d="M33 53h11v6h-11z" />
    </Folder>
  ),
  sync: (
    <Folder>
      <rect x="9" y="12" width="12" height="31" rx="4" fill="#ddd" stroke="#000" strokeWidth="1.800" />
      <circle cx="15" cy="18" r="4" fill="#e00000" /><circle cx="15" cy="27.500" r="4" fill="#ff9a00" /><circle cx="15" cy="37" r="4" fill="#00b81c" />
      <circle cx="34.500" cy="28" r="8.800" fill="#ffc800" stroke="#222" strokeWidth="1.500" /><Line d="M34.500 22v8M34.500 32v3" w={3} />
      <Line d="M16 50.500h37M48 45l5 5.500-5 5.500" w={1.600} />
      <rect x="25" y="44.500" width="18" height="12" fill="#f0f" stroke="#000" strokeWidth="1.800" /><Line d="M31 44v13M37 44v13" w={1.500} />
    </Folder>
  ),
  graphics: (
    <Folder>
      <path d="M18 14l6-2 12 6 7 3-2 4-5-1-3 5-3 8-5 4-10-4-9-10 7-1z" fill="#a02430" />
      <path d="M19 14l5-2 8 4-5 3z" fill="#e8c4c6" /><path d="M20 19l11 3-4 9-9-3z" fill="#cf4650" />
      <path d="M6 24l3 3 7 1 4 5 8 2 1 3-3 3-5 0-9-6-6-7z" fill="#1c0206" />
      <ellipse cx="41" cy="53" rx="5.500" ry="4" /><Line d="M45.500 53v-17q1 5 5 6 3 4 0 8" w={1.800} />
    </Folder>
  ),
  report: (
    <Folder>
      <path d="M9 27v-15h30l8 8v7" fill="#ffffcc" stroke="#000" strokeWidth="1.500" /><Line d="M39 12v8h8" w={1.500} />
      <Line d="M12 15h4M18 18l3 0 3-2 3 2 6-1" w={1.500} dash="4 2" /><Line d="M12 21.500h24M12 25.500h24" dash="4 3" />
      <path d="M10 34h7l4 4v8h-11z" fill="#ff0" stroke="#000" strokeWidth="1.400" />
      <Line d="M14 48v3h8" c="#f00" w={1.800} /><path d="M21 47l5 4-5 4z" fill="#f00" />
      <path d="M27 47l8-6h17v9l-7 7h-18z" fill="#b5b5b5" stroke="#000" strokeWidth="1.500" />
      <path d="M35 44v-10h7l4 4v8z" fill="#fff" stroke="#000" strokeWidth="1.400" /><Line d="M28 49h16l7-6M30 53h12" /><path d="M28 47h3v3h-3z" fill="#0c0" />
    </Folder>
  ),
};

/* ---------- data ---------- */

type Tile = { icon: string; label: string; kind: Kind; col: number; row: number; selected?: boolean };
const tile = (row: number, col: number, kind: Kind, icon: string, label: string, selected?: boolean): Tile => ({ row, col, kind, icon, label, selected });

const measurementTiles: Tile[] = [
  tile(1, 1, 'vi', 'basic', '基本平均直流-\n均方根'),
  tile(1, 2, 'vi', 'average', '平均直流-\n均方根'),
  tile(1, 3, 'vi', 'cycle', '周期平均值和均\n方根'),
  tile(1, 5, 'folder', 'monitor', '波形监测'),
  tile(2, 1, 'vi', 'transient', '瞬态特性测量'),
  tile(2, 2, 'vi', 'pulse', '脉冲测量'),
  tile(2, 3, 'vi', 'level', '幅值和电平'),
  tile(3, 1, 'vi', 'tone', '提取单频信息', true),
  tile(3, 2, 'vi', 'multitone', '提取混合单频信\n息'),
  tile(3, 3, 'vi', 'harm', '谐波失真分析'),
  tile(3, 4, 'vi', 'sinad', 'SINAD分析'),
  tile(4, 1, 'vi', 'psd', 'FFT功率谱和PS\nD'),
  tile(4, 2, 'vi', 'fftR', 'FFT频谱（幅度-\n相位）'),
  tile(4, 3, 'vi', 'fftI', 'FFT频谱（实部-\n虚部）'),
  tile(5, 1, 'vi', 'frfR', '频率响应函数（\n幅度-相位）'),
  tile(5, 2, 'vi', 'frfI', '频率响应函数（\n实部-虚部）'),
  tile(5, 3, 'vi', 'crossR', '交叉谱（幅度-\n相位）'),
  tile(5, 4, 'vi', 'crossI', '交叉谱（实部-\n虚部）'),
  tile(6, 1, 'express', 'exSpectrum', '频谱测量'),
  tile(6, 2, 'express', 'exDual', '双通道谱测量'),
  tile(6, 3, 'express', 'exDistortion', '失真测量'),
  tile(6, 4, 'express', 'exTone', '单频测量'),
  tile(6, 5, 'express', 'exTiming', '信号的时间与瞬\n态特性测量'),
  tile(6, 6, 'express', 'exLevel', '幅值和电平测量'),
];

const signalTiles: Tile[] = [
  tile(1, 3, 'folder', 'wave', '波形测量', true),
  tile(2, 3, 'folder', 'windowFn', '窗'),
  tile(3, 3, 'folder', 'transform', '变换'),
  tile(3, 4, 'folder', 'ptbypt', '逐点'),
];

const programmingTiles: Tile[] = [
  ['struct', '结构'], ['array', '数组'], ['cluster', '簇、类与变体'],
  ['numeric', '数值'], ['boolean', '布尔'], ['string', '字符串'],
  ['compare', '比较'], ['timing', '定时'], ['dialog', '对话框与用户界\n面'],
  ['file', '文件I/O'], ['waveform', '波形'], ['appctl', '应用程序控制'],
  ['sync', '同步'], ['graphics', '图形与声音'], ['report', '报表生成'],
].map(([icon, label], i) => tile(Math.floor(i / 3) + 1, (i % 3) + 1, 'folder', icon, label));

const categories = ['测量I/O', '仪器I/O', '数学', '信号处理', '数据通信', '互连接口', '控制和仿真', 'Express', '附加工具包', '选择VI...'];
const menus = ['文件(F)', '编辑(E)', '查看(V)', '项目(P)', '操作(O)', '工具(T)', '窗口(W)', '帮助(H)'];

const Tiles = ({ items }: { items: Tile[] }) => (
  <>
    {items.map((t) => (
      <TileButton key={t.icon} type="button" $col={t.col} $row={t.row} $selected={t.selected}>
        <TileIcon $kind={t.kind}>{icons[t.icon]}</TileIcon>
        <TileLabel>{t.label}</TileLabel>
      </TileButton>
    ))}
  </>
);

/* ---------- toolbar ---------- */

const Tool = ({ name, w = 26, children }: { name: string; w?: number; children: React.ReactNode }) => (
  <button type="button" aria-label={name}>
    <svg width={w} height="36" viewBox={`0 0 ${w} 36`}>{children}</svg>
  </button>
);

const Tools = () => (
  <ToolBar>
    <ToolGroup>
      <Tool name="运行"><path d="M5 14h8v-5l9 9-9 10v-6h-8z" fill="#fff" stroke="#222" strokeWidth="2" /></Tool>
      <Tool name="连续运行">
        <path d="M3 17l5-9h9l-2-3h8v9l-3-2h-9l-3 7zM23 18l-5 9h-8l2 3h-9v-9l3 2h9l3-6z" fill="#fff" stroke="#222" strokeWidth="1.800" />
      </Tool>
    </ToolGroup>
    <ToolGroup>
      <Tool name="中止执行">
        <path d="M8 7h10l6 6v11l-6 6h-10l-6-6v-11z" fill="#e8e8e8" stroke="#a5a5a5" strokeWidth="2" />
        <path d="M9 10h8l4 4v9l-4 4h-8l-4-4v-9z" fill="#dd9c9c" />
      </Tool>
      <Tool name="暂停"><path d="M6 11h5v16h-5zM15 11h5v16h-5z" /></Tool>
    </ToolGroup>
    <Tool name="高亮显示执行过程">
      <path d="M9 24q0-4-3-7-2-8 6-10 9-1 9 8-1 4-4 6v3z" fill="#e9e9e9" stroke="#888" strokeWidth="1.600" />
      <path d="M13 22v-6l-2-2M14 16l2-2" stroke="#888" fill="none" /><path d="M9 24h8v5q-4 5-8 0z" fill="#b89b45" stroke="#777" />
    </Tool>
    <Tool name="保存连线值">
      <circle cx="7" cy="11" r="5" fill="#fff" stroke="#222" strokeWidth="2" /><Line d="M7 8v3h3" w={1.500} />
      <rect x="15" y="8" width="9" height="9" fill="#ccc" stroke="#888" strokeWidth="1.600" />
      <Line d="M8 17v10" /><Line d="M1 28h10" c="#00f" w={3} /><rect x="10" y="24" width="6" height="6" fill="#fff" stroke="#222" strokeWidth="2" />
      <Line d="M17 27h5" c="#0a0" w={2} /><path d="M20 22l6 5-6 5z" fill="#0b0" />
    </Tool>
    <ToolGroup>
      <Tool name="单步步入"><Line d="M2 13v8h7" w={3} /><path d="M7 15l6 6-6 6z" /><rect x="16" y="17" width="8" height="10" fill="#ff9" stroke="#000" strokeWidth="2" /></Tool>
      <Tool name="单步步过"><Line d="M3 22v-11h15" w={3} /><path d="M16 6l7 5-7 6z" /><rect x="7" y="18" width="11" height="10" fill="#ff9" stroke="#000" strokeWidth="2" /></Tool>
      <Tool name="单步步出"><rect x="2" y="19" width="9" height="9" fill="#ffffc0" stroke="#aaa" strokeWidth="2" /><Line d="M14 26h6v-14" c="#999" w={3} /><path d="M14 13l6-6 6 6z" fill="#999" /></Tool>
    </ToolGroup>
    <FontBox>
      <PlainSelect aria-label="文本设置"><option>17pt 应用程序字体</option></PlainSelect>
      <SelectMark $right={11}><Drop /></SelectMark>
    </FontBox>
    <Tool name="对齐对象" w={42}>
      <rect x="3" y="7" width="6" height="6" fill="#3cf" stroke="#000" strokeWidth="2" /><Line d="M6 15v10" w={2} /><path d="M2 23h8l-4 5z" />
      <rect x="13" y="19" width="10" height="8" fill="#ff9" stroke="#000" strokeWidth="2" /><Line d="M2 30h22" dash="2 2" /><path d="M27 14h9l-4.500 7z" />
    </Tool>
    <Tool name="分布对象" w={42}>
      <Line d="M3 13v-4h22v4M14 5v4" w={1.600} /><rect x="3" y="18" width="4" height="6" /><rect x="9" y="16" width="5" height="12" fill="#ff9" stroke="#000" strokeWidth="2" />
      <rect x="18" y="19" width="7" height="8" fill="#3cf" stroke="#000" strokeWidth="2" /><path d="M28 14h9l-4.500 7z" />
    </Tool>
    <Tool name="重新排序" w={42}>
      <path d="M13 7q-11 3-9 13l-3 0 6 8 6-8h-4q0-5 4-8z" fill="#e6d61c" stroke="#8a7d00" /><path d="M8 26q4 2 7-2v6q-5 2-7-2z" fill="#e6d61c" />
      <path d="M16 29q11-3 9-13l3 0-6-8-6 8h4q0 5-4 8z" fill="#38a9c9" stroke="#115e78" /><path d="M21 10q-4-3-7 1l0-5q4-2 7 1z" fill="#38a9c9" /><path d="M30 14h9l-4.500 7z" />
    </Tool>
    <Tool name="整理程序框图" w={42}>
      <Line d="M1 11h8M12 19h9" c="#f33" w={2} /><path d="M3 7l11 6-11 7z" fill="#ff0" stroke="#333" /><path d="M16 15l8 4-8 5z" fill="#ff0" stroke="#333" />
      <path d="M27 6h3l0 10 3 4-1 10h-15l-4-3 9-5 4-6z" fill="#7c5024" stroke="#40260c" /><Line d="M22 27l5-6" c="#c8954e" />
    </Tool>
  </ToolBar>
);

const HelpPins = () => (
  <svg width="127" height="168" viewBox="0 0 127 168">
    <Line d="M124 14h-59v24" c="#f0f" w={5} /><Line d="M122 14h-57v24" c="#fff" w={1.400} dash="2.500 3" />
    <Line d="M5 42.500h28" c="#8b1a0a" w={5} /><Line d="M7 42.500h26" c="#fff" w={1.400} dash="2.500 3" />
    <Line d="M83 42.500h38M112 50v20.500h10M108 98.500h14" c="#ff9a40" w={2} />
    <Line d="M108 127h16" c="#222" w={5} /><Line d="M108 127h15" c="#dd0" w={2} dash="4 2" />
    <Line d="M108 155h16" c="#f0f" w={5} /><Line d="M108 155h15" c="#fff" w={1.400} dash="2.500 3" />
    <g transform="translate(33 36)">
      <ViBase />
      <Line d={toneNoise} c={BLUE} w={1.400} />
      <LensGlass><Line d={toneCurve} c={BLUE} w={1.600} /></LensGlass>
    </g>
  </svg>
);

const Diagram = () => (
  <Canvas>
    <Node $x={469} $y={234}>
      <EnumConstant>
        <svg width="11" height="12" viewBox="0 0 11 12"><path d="M0 6l4-5v10zM11 6l-4-5v10z" fill={BLUE} /></svg>
        <EnumSelect aria-label="Signal type"><option>Sine Wave</option></EnumSelect>
        <SelectMark $right={2}><Drop size={11} color={BLUE} /></SelectMark>
      </EnumConstant>
    </Node>
    <Node $x={511} $y={266}>frequency</Node>
    <Node $x={504} $y={363}>sampling info</Node>
    <Node $x={509} $y={234}>
      <svg width="162" height="160" viewBox="0 0 162 160">
        <Line d="M96 16.500h34v41" c="#4040ff" />
        <Line d="M60 90h50" c="#ff9a40" />
        <Line d="M130 108v52" c="#a0451c" w={5} /><Line d="M130 108v52" c="#e8c0a8" w={1.200} dash="1.500 2" />
        <rect x="2.500" y="61.500" width="56" height="56" fill="#dcdcdc" stroke="#ff8000" strokeWidth="3.500" />
        <rect x="5" y="64" width="51" height="51" fill="none" stroke="#fff" strokeWidth="1.500" />
        <rect x="7" y="66" width="47" height="47" fill="none" stroke="#ff9a40" strokeWidth="1.600" />
        <rect x="19" y="77" width="35" height="24" fill="#aaa" />
        <rect x="9" y="75" width="10" height="28" rx="5" fill="#ccc" stroke="#aaa" />
        <Line d="M11 87l3-5 3 5M11 92l3 5 3-5" c="#fff" w={1.400} />
        <rect x="24" y="81" width="26" height="16" fill="#fff" stroke="#333" />
        <T x={37} y={94} s={13}>1.23</T>
        <path d="M51 82l7 8-7 8z" fill="#fff" stroke="#333" strokeWidth="1.400" />
        <rect x="18" y="106" width="24" height="12" fill="#fff" stroke="#ff9a40" strokeWidth="1.500" />
        <T x={30} y={116} s={11} w={700} f="#ff8000" font="DejaVu Sans Mono">DBL</T>
        <g transform="translate(111 58)">
          <ViBase />
          <Line d="M26 16v-10h17" w={1.500} dash="1.500 1.500" /><Line d="M43 3l4 3-4 3" w={1.400} />
          <rect x="13" y="16" width="24" height="18" fill="#fff" stroke="#000" strokeWidth="1.800" />
          <Line d="M14 31l6-8 5 6 5-5 6 8M14 21q5-4 10 2t12 3M15 18h6v2M36 18h-5v3" c={BLUE} w={1.600} />
        </g>
      </svg>
    </Node>
  </Canvas>
);

export default function App() {
  return (
    <>
      <GlobalStyle />
      <AppWindow>
        <TitleBar>
          <svg width="25" height="25" viewBox="0 0 25 25">
            <rect width="25" height="25" fill="#606468" /><path d="M2 2l19 10-19 11z" fill="#ffd000" /><Line d="M4 12h6M7 9v6" w={1.500} />
          </svg>
          <TitleText>{'未命名 1 程序框图（练习.lvproj/我的电脑） *'}</TitleText>
          <CaptionButton type="button" aria-label="最小化">
            <svg width="16" height="16"><Line d="M0 7.500h16" c="#fff" w={1} /></svg>
          </CaptionButton>
          <CaptionButton type="button" aria-label="还原">
            <svg width="16" height="16"><Line d="M1 4.500h10v10h-10zM4 4v-3h11v10h-4" c="#fff" w={1.200} /></svg>
          </CaptionButton>
          <CaptionButton type="button" aria-label="关闭">
            <svg width="16" height="16"><Line d="M1 1l14 14M15 1l-14 14" c="#fff" w={1.300} /></svg>
          </CaptionButton>
        </TitleBar>
        <MenuBar>{menus.map((m) => <button type="button" key={m}>{m}</button>)}</MenuBar>
        <Tools />
        <ConnectorIcon type="button" aria-label="VI 图标">
          <svg width="50" height="50" viewBox="0 0 50 50">
            <rect x="1" y="1" width="48" height="48" fill="#fff" stroke="#000" strokeWidth="2" />
            <rect x="16" y="5" width="18" height="26" fill="#c8c8a8" stroke="#000" strokeWidth="2" />
            <Line d="M24 27h24" c="#f00" /><path d="M29 21l14 6-14 7z" fill="#ff0" stroke="#000" /><Line d="M31 27h6M34 24v6" w={1.500} />
            <T x={40} y={46} s={14}>1</T>
          </svg>
        </ConnectorIcon>
        <Editor>
          <Diagram />
          <ScrollTrack $vertical>
            <ScrollButton type="button" aria-label="向上滚动"><SmallChevron turn={0} /></ScrollButton>
            <ScrollThumb $vertical $before={61} $after={0} />
            <ScrollButton type="button" aria-label="向下滚动"><SmallChevron turn={180} /></ScrollButton>
          </ScrollTrack>
          <BottomBar>
            <ContextTab type="button">练习.lvproj/我的电脑</ContextTab>
            <ScrollTrack>
              <ScrollButton type="button" aria-label="向左滚动"><SmallChevron turn={270} /></ScrollButton>
              <ScrollThumb $before={96} $after={0} />
              <ScrollButton type="button" aria-label="向右滚动"><SmallChevron turn={90} /></ScrollButton>
            </ScrollTrack>
          </BottomBar>
          <Corner />
        </Editor>

        <HelpWindow>
          <HelpHeader>
            <HelpName>即时帮助</HelpName>
            <HelpClose type="button" aria-label="关闭帮助">
              <svg width="10" height="10"><Line d="M1 1l8 8M9 1l-8 8" c="#fff" w={1.500} /></svg>
            </HelpClose>
          </HelpHeader>
          <HelpMiddle>
            <HelpBody>
              <HelpHeading>提取单频信息<br />[Extract Single Tone Information.vi]</HelpHeading>
              <Pinout>
                <PinInput>时间信号输入</PinInput>
                <HelpPins />
                <PinOutputs>
                  <li>导出的信号</li><li>检测到的频率</li><li>检测到的幅值</li>
                  <li>检测到的相位（度）</li><li>错误输出</li><li>测量信息</li>
                </PinOutputs>
              </Pinout>
              <HelpText>{'或在指定频域内搜\n。\n通道或多通道。\n端可确定要使用的'}</HelpText>
            </HelpBody>
            <HelpScroll>
              <ScrollTrack $vertical>
                <ScrollButton type="button" aria-label="帮助向上滚动"><SmallChevron turn={0} /></ScrollButton>
                <ScrollThumb $vertical $before={0} $after={49} />
                <ScrollButton type="button" aria-label="帮助向下滚动"><SmallChevron turn={180} /></ScrollButton>
              </ScrollTrack>
            </HelpScroll>
          </HelpMiddle>
          <HelpFooter>
            <SmallChevron turn={90} />
            <svg width="16" height="16" viewBox="0 0 16 16">
              <path d="M11 1h3v3h-3zM6 6h3v3h-3zM11 6h3v3h-3zM1 11h3v3h-3zM6 11h3v3h-3zM11 11h3v3h-3z" fill="#bbb" />
            </svg>
          </HelpFooter>
        </HelpWindow>

        <PaletteWindow $left={1584} $top={211} $width={519}>
          <PaletteHeader>
            <Pin />
            <PaletteTitle>函数</PaletteTitle>
            <SearchButton type="button">
              <svg width="26" height="26" viewBox="0 0 26 26">
                <circle cx="10" cy="10" r="7.500" fill="none" stroke="#444" strokeWidth="2.500" /><Line d="M15 16l8 8" c="#444" w={4} />
              </svg>
              搜索
            </SearchButton>
          </PaletteHeader>
          <CategoryList><li><CategoryButton type="button">编程<RightMark /></CategoryButton></li></CategoryList>
          <TileGrid $cols={3} $rows={5} $top={12} $left={4} $right={23} $bottom={2}>
            <Tiles items={programmingTiles} />
          </TileGrid>
          <CategoryList>
            {categories.map((c) => (
              <li key={c}>
                <CategoryButton type="button" $active={c === '信号处理'}>{c}{c !== '选择VI...' && <RightMark />}</CategoryButton>
              </li>
            ))}
            <li>
              <MoreButton type="button" aria-label="显示更多">
                <svg width="12" height="14"><Line d="M1 1l5 5 5-5M1 7l5 5 5-5" c="#333" w={1.500} /></svg>
              </MoreButton>
            </li>
          </CategoryList>
        </PaletteWindow>

        <PaletteWindow $left={923} $top={874} $width={672}>
          <PaletteHeader $tall />
          <PaletteCaption>波形测量</PaletteCaption>
          <TileGrid $cols={4} $rows={3} $top={1} $left={1} $right={17} $bottom={10}><Tiles items={signalTiles} /></TileGrid>
        </PaletteWindow>

        <PaletteWindow $left={268} $top={489} $width={997}>
          <PaletteHeader $tall><Pin /><PaletteTitle>波形测量</PaletteTitle></PaletteHeader>
          <PaletteCaption>提取单频信息</PaletteCaption>
          <TileGrid $cols={6} $rows={6} $top={1} $left={1} $right={17} $bottom={10}><Tiles items={measurementTiles} /></TileGrid>
        </PaletteWindow>

        <Annotation width="236" height="240" viewBox="0 0 236 240">
          <path d="M5 5L215 213L217 211L225 232L204 223L207 221Z" fill="#fb3838" />
        </Annotation>
      </AppWindow>
    </>
  );
}
